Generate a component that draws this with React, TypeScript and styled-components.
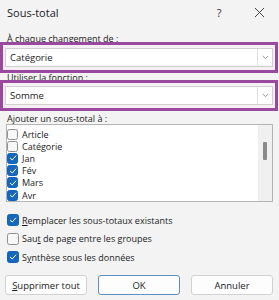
import React from "react";
import styled, { createGlobalStyle } from "styled-components";

const GlobalStyle = createGlobalStyle`
  html, body { margin: 0; padding: 0; background: #f3f3f3; }
  body { font-family: "Open Sans", "Noto Sans", sans-serif; color: #1b1b1b; }
  * { box-sizing: border-box; }
`;

const Dialog = styled.div`
  width: 279px;
  height: 300px;
  background: #f3f3f3;
  display: flex;
  flex-direction: column;
  font-size: 9px;
  overflow: hidden;
`;

const TitleBar = styled.div`
  height: 25px;
  display: flex;
  align-items: center;
  padding-left: 7px;
`;

const Title = styled.div`
  flex: 1;
  font-size: 11px;
  color: #1b1b1b;
`;

const TitleButton = styled.div<{ $w: number }>`
  width: ${(p) => p.$w}px;
  display: flex;
  align-items: center;
  justify-content: center;
  font-size: 11px;
  color: #333;
`;

const Label = styled.div<{ $h: number }>`
  height: ${(p) => p.$h}px;
  padding-left: 7px;
  display: flex;
  align-items: flex-end;
  line-height: 11px;
  white-space: nowrap;
`;

const LabelText = styled.span<{ $shift: number }>`
  transform: translateY(${(p) => p.$shift}px);
`;

const Highlight = styled.div`
  position: relative;
  z-index: 1;
  margin: 0 1px 0 0;
  border: 3px solid #994a9e;
  background: #f6f0f6;
  padding: 3px 2px;
`;

const Select = styled.div`
  height: 19px;
  background: #ffffff;
  border: 1px solid #cfcfcf;
  display: flex;
  align-items: center;
`;

const SelectValue = styled.div`
  flex: 1;
  padding-left: 4px;
  font-size: 9.5px;
`;

const SelectArrow = styled.div`
  width: 15px;
  height: 100%;
  border-left: 1px solid #e2e2e2;
  display: flex;
  align-items: center;
  justify-content: center;
`;

const ListBox = styled.div`
  margin: 0 6px 0 6px;
  height: 78px;
  background: #fff;
  border: 1px solid #b4b4b4;
  display: flex;
`;

const ListItems = styled.div`
  flex: 1;
  padding-top: 3px;
  display: flex;
  flex-direction: column;
`;

const ListRow = styled.div`
  height: 12.2px;
  display: flex;
  align-items: center;
  gap: 4px;
  padding-left: 0px;
`;

const Scrollbar = styled.div`
  width: 14px;
  background: #f0f0f0;
  display: flex;
  justify-content: center;
  padding-top: 17px;
`;

const Thumb = styled.div`
  width: 4px;
  height: 18px;
  background: #8a8a8a;
  border-radius: 1px;
`;

const Box = styled.div<{ $checked: boolean; $size: number }>`
  width: ${(p) => p.$size}px;
  height: ${(p) => p.$size}px;
  flex: none;
  border-radius: 2.5px;
  border: 1px solid ${(p) => (p.$checked ? "#0f63b8" : "#8f8f8f")};
  background: ${(p) => (p.$checked ? "#1567bd" : "#f7f7f7")};
  display: flex;
  align-items: center;
  justify-content: center;
`;

const Options = styled.div`
  padding: 9px 0 0 7px;
  display: flex;
  flex-direction: column;
`;

const OptionRow = styled.div`
  height: 18.5px;
  display: flex;
  align-items: center;
  gap: 3px;
`;

const Buttons = styled.div`
  margin-top: auto;
  padding: 0 6px 5px 5px;
  display: flex;
  gap: 11px;
`;

const Button = styled.div<{ $primary?: boolean }>`
  flex: 1;
  height: 20px;
  background: #fdfdfd;
  border: 1px solid ${(p) => (p.$primary ? "#5d8fc4" : "#d2d2d2")};
  border-radius: 3px;
  display: flex;
  align-items: center;
  justify-content: center;
  font-size: 9.5px;
`;

const Check = () => (
  <svg width="8" height="8" viewBox="0 0 8 8">
    <path d="M1.3 4.2 L3.2 6 L6.8 2" fill="none" stroke="#fff" strokeWidth="1" strokeLinecap="round" strokeLinejoin="round" />
  </svg>
);

const CheckBox = ({ checked, size }: { checked: boolean; size: number }) => (
  <Box $checked={checked} $size={size}>{checked && <Check />}</Box>
);

const Chevron = () => (
  <svg width="7" height="5" viewBox="0 0 7 5">
    <path d="M0.8 1 L3.5 3.7 L6.2 1" fill="none" stroke="#7a7a7a" strokeWidth="0.8" />
  </svg>
);

const CloseIcon = () => (
  <svg width="11" height="11" viewBox="0 0 11 11">
    <path d="M1 1 L10 10 M10 1 L1 10" stroke="#333" strokeWidth="0.9" />
  </svg>
);

const items: [string, boolean][] = [
  ["Article", false],
  ["Catégorie", false],
  ["Jan", true],
  ["Fév", true],
  ["Mars", true],
  ["Avr", true],
];

export default function App() {
  return (
    <>
      <GlobalStyle />
      <Dialog>
        <TitleBar>
          <Title>Sous-total</Title>
          <TitleButton $w={40}>?</TitleButton>
          <TitleButton $w={40}><CloseIcon /></TitleButton>
        </TitleBar>
        <Label $h={17}>
          <LabelText $shift={2}><u>À</u> chaque changement de :</LabelText>
        </Label>
        <Highlight>
          <Select>
            <SelectValue>Catégorie</SelectValue>
            <SelectArrow><Chevron /></SelectArrow>
          </Select>
        </Highlight>
        <Label $h={7}>
          <LabelText $shift={3}><u>U</u>tiliser la fonction :</LabelText>
        </Label>
        <Highlight>
          <Select>
            <SelectValue>Somme</SelectValue>
            <SelectArrow><Chevron /></SelectArrow>
          </Select>
        </Highlight>
        <Label $h={13}>
          <LabelText $shift={0}>A<u>j</u>outer un sous-total à :</LabelText>
        </Label>
        <ListBox>
          <ListItems>
            {items.map(([name, c]) => (
              <ListRow key={name}>
                <CheckBox checked={c} size={11} />
                <span>{name}</span>
              </ListRow>
            ))}
          </ListItems>
          <Scrollbar>
            <Thumb />
          </Scrollbar>
        </ListBox>
        <Options>
          <OptionRow>
            <CheckBox checked={true} size={12} />
            <span><u>R</u>emplacer les sous-totaux existants</span>
          </OptionRow>
          <OptionRow>
            <CheckBox checked={false} size={12} />
            <span>Sau<u>t</u> de page entre les groupes</span>
          </OptionRow>
          <OptionRow>
            <CheckBox checked={true} size={12} />
            <span>S<u>y</u>nthèse sous les données</span>
          </OptionRow>
        </Options>
        <Buttons>
          <Button><span><u>S</u>upprimer tout</span></Button>
          <Button $primary>OK</Button>
          <Button>Annuler</Button>
        </Buttons>
      </Dialog>
    </>
  );
}
